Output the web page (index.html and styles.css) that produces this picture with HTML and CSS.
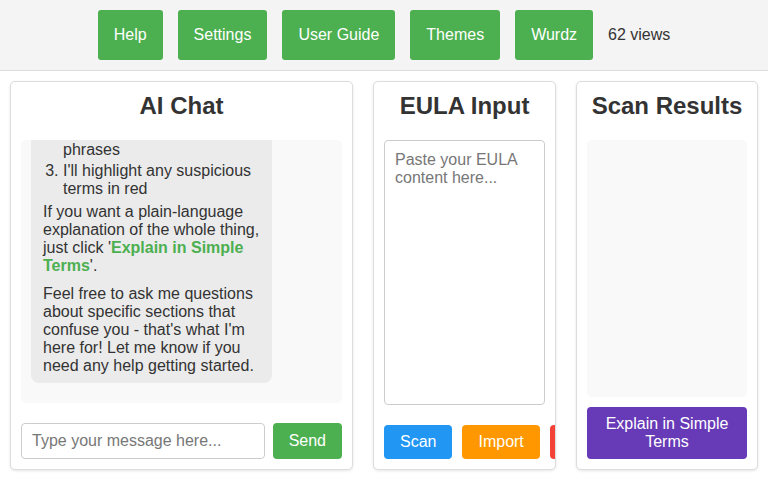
FILE: index.html
```html
<!DOCTYPE html>
<html lang="en">
<head>
  <meta charset="UTF-8">
  <meta name="viewport" content="width=device-width, initial-scale=1.0">
  <title>EULA Scanner</title>
  <link rel="stylesheet" href="styles.css">
</head>
<body>
  <header class="topbar">
    <button class="nav-btn">Help</button>
    <button class="nav-btn">Settings</button>
    <button class="nav-btn">User Guide</button>
    <button class="nav-btn">Themes</button>
    <button class="nav-btn">Wurdz</button>
    <span class="views">62 views</span>
  </header>

  <main class="layout">
    <section class="panel chat-panel">
      <h2>AI Chat</h2>
      <div class="chat-box" id="chatBox">
        <div class="message bot">
          <p>Hi! I'm your EULA assistant. Here's how to get started:</p>
          <ol>
            <li>Paste your EULA text into the input box</li>
            <li>Click 'Scan' to analyze it for potentially concerning phrases</li>
            <li>I'll highlight any suspicious terms in red</li>
          </ol>
          <p>If you want a plain-language explanation of the whole thing, just click '<strong class="hl">Explain in Simple Terms</strong>'.</p>
          <p>Feel free to ask me questions about specific sections that confuse you - that's what I'm here for! Let me know if you need any help getting started.</p>
        </div>
      </div>
      <div class="chat-input">
        <input type="text" placeholder="Type your message here...">
        <button class="btn btn-green">Send</button>
      </div>
    </section>

    <section class="panel eula-panel">
      <h2>EULA Input</h2>
      <textarea class="eula-text" placeholder="Paste your EULA content here..."></textarea>
      <div class="actions">
        <button class="btn btn-blue">Scan</button>
        <button class="btn btn-orange">Import</button>
        <button class="btn btn-red">Clear</button>
      </div>
    </section>

    <section class="panel results-panel">
      <h2>Scan Results</h2>
      <div class="results"></div>
      <button class="btn btn-purple explain">Explain in Simple Terms</button>
    </section>
  </main>

  <script>
    // Keep the newest chat message in view
    const chatBox = document.getElementById('chatBox');
    chatBox.scrollTop = chatBox.scrollHeight;
  </script>
</body>
</html>
```
FILE: styles.css
```css
* {
  margin: 0;
  padding: 0;
  box-sizing: border-box;
}

body {
  font-family: 'Liberation Sans', Arial, sans-serif;
  color: #333;
  background-color: #fff;
  height: 480px;
  display: flex;
  flex-direction: column;
}

button,
input,
textarea {
  font-family: inherit;
  font-size: 16px;
}

/* Top bar */
.topbar {
  display: flex;
  justify-content: center;
  align-items: center;
  gap: 15px;
  height: 71px;
  padding-bottom: 1px;
  background-color: #f4f4f4;
  border-bottom: 1px solid #ddd;
}

.nav-btn {
  height: 50px;
  padding: 0 16px;
  border: none;
  border-radius: 3px;
  background-color: #4caf50;
  color: #fff;
  cursor: pointer;
}

.views {
  font-size: 16px;
  color: #333;
}

/* Panels */
.layout {
  flex: 1;
  display: flex;
  gap: 20px;
  padding: 10px;
  min-height: 0;
}

.panel {
  display: flex;
  flex-direction: column;
  padding: 10px;
  background-color: #fff;
  border: 1px solid #ddd;
  border-radius: 5px;
  box-shadow: 0 1px 3px rgba(0, 0, 0, 0.1);
  overflow: hidden;
  min-height: 0;
}

.chat-panel {
  flex: 0 0 343px;
}

.eula-panel {
  flex: 0 0 183px;
}

.results-panel {
  flex: 1;
}

.panel h2 {
  font-size: 24px;
  text-align: center;
  margin-bottom: 20px;
  color: #333;
}

/* Chat */
.chat-box {
  flex: 1;
  min-height: 0;
  padding: 10px;
  margin-bottom: 20px;
  background-color: #f9f9f9;
  border-radius: 5px;
  overflow-y: auto;
  scrollbar-width: none;
}

.message {
  max-width: 80%;
  padding: 8px 12px;
  margin-bottom: 10px;
  border-radius: 8px;
  background-color: #ebebeb;
  font-size: 16px;
}

.message p {
  margin-bottom: 10px;
}

.message p:last-child {
  margin-bottom: 0;
}

.message ol {
  padding-left: 20px;
  margin-bottom: 5px;
}

.message li {
  margin-bottom: 3px;
}

.hl {
  color: #4caf50;
}

.chat-input {
  display: flex;
  gap: 8px;
  height: 36px;
}

.chat-input input {
  flex: 1;
  min-width: 0;
  padding: 0 10px;
  border: 1px solid #ccc;
  border-radius: 4px;
  color: #333;
}

.chat-input input::placeholder {
  color: #777;
}

/* Buttons */
.btn {
  border: none;
  border-radius: 4px;
  color: #fff;
  padding: 0 16px;
  cursor: pointer;
  flex-shrink: 0;
}

.btn-green { background-color: #4caf50; }
.btn-blue { background-color: #2196f3; }
.btn-orange { background-color: #ff9800; }
.btn-red { background-color: #f44336; }
.btn-purple { background-color: #673ab7; }

/* EULA input */
.eula-text {
  flex: 1;
  min-height: 0;
  width: 100%;
  padding: 10px;
  margin-bottom: 20px;
  border: 1px solid #ccc;
  border-radius: 4px;
  resize: none;
  line-height: 1.15;
}

.eula-text::placeholder {
  color: #777;
}

.actions {
  display: flex;
  gap: 10px;
  height: 34px;
}

/* Results */
.results {
  flex: 1;
  margin-bottom: 10px;
  background-color: #f9f9f9;
  border-radius: 5px;
}

.explain {
  height: 52px;
  padding: 0 10px;
  line-height: 18px;
}
```
